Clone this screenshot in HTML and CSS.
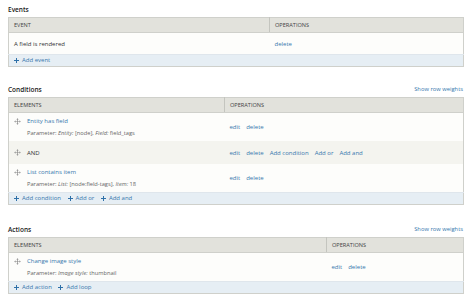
FILE: index.html
```html
<!DOCTYPE html>
<html lang="en">
<head>
    <meta charset="UTF-8">
    <title>Rule elements</title>
    <link rel="stylesheet" href="styles.css">
</head>
<body>
    <div class="page">
        <!-- Events -->
        <div class="section-title section-first">
            <h2>Events</h2>
        </div>
        <table class="rules-table">
            <thead>
                <tr>
                    <th class="col-events">Event</th>
                    <th>Operations</th>
                </tr>
            </thead>
            <tbody>
                <tr class="row-odd row-event">
                    <td class="plain">A field is rendered</td>
                    <td><a href="#">delete</a></td>
                </tr>
            </tbody>
            <tfoot>
                <tr>
                    <td colspan="2">
                        <a href="#" class="add-link"><svg viewBox="0 0 10 10"><path d="M4 0h2v4h4v2H6v4H4V6H0V4h4z"/></svg>Add event</a>
                    </td>
                </tr>
            </tfoot>
        </table>

        <!-- Conditions -->
        <div class="section-title">
            <h2>Conditions</h2>
            <a href="#" class="weights">Show row weights</a>
        </div>
        <table class="rules-table">
            <thead>
                <tr>
                    <th class="col-conditions">Elements</th>
                    <th>Operations</th>
                </tr>
            </thead>
            <tbody>
                <tr class="row-odd row-tall">
                    <td>
                        <div class="element">
                            <span class="handle"><svg viewBox="0 0 12 12"><path d="M6 0.5l2 2H6.6v2.9h2.9V4l2 2-2 2V6.6H6.6v2.9H8l-2 2-2-2h1.4V6.6H2.5V8l-2-2 2-2v1.4h2.9V2.5H4z"/></svg></span>
                            <div>
                                <a href="#" class="element-name">Entity has field</a>
                                <div class="param">Parameter: <em>Entity:</em> [node], <em>Field:</em> field_tags</div>
                            </div>
                        </div>
                    </td>
                    <td class="ops"><a href="#">edit</a><a href="#">delete</a></td>
                </tr>
                <tr class="row-even row-and">
                    <td>
                        <div class="element">
                            <span class="handle"><svg viewBox="0 0 12 12"><path d="M6 0.5l2 2H6.6v2.9h2.9V4l2 2-2 2V6.6H6.6v2.9H8l-2 2-2-2h1.4V6.6H2.5V8l-2-2 2-2v1.4h2.9V2.5H4z"/></svg></span>
                            <span class="plain">AND</span>
                        </div>
                    </td>
                    <td class="ops"><a href="#">edit</a><a href="#">delete</a><a href="#">Add condition</a><a href="#">Add or</a><a href="#">Add and</a></td>
                </tr>
                <tr class="row-odd row-tall">
                    <td>
                        <div class="element">
                            <span class="handle"><svg viewBox="0 0 12 12"><path d="M6 0.5l2 2H6.6v2.9h2.9V4l2 2-2 2V6.6H6.6v2.9H8l-2 2-2-2h1.4V6.6H2.5V8l-2-2 2-2v1.4h2.9V2.5H4z"/></svg></span>
                            <div>
                                <a href="#" class="element-name">List contains item</a>
                                <div class="param">Parameter: <em>List:</em> [node:field-tags], <em>Item:</em> 18</div>
                            </div>
                        </div>
                    </td>
                    <td class="ops"><a href="#">edit</a><a href="#">delete</a></td>
                </tr>
            </tbody>
            <tfoot>
                <tr>
                    <td colspan="2">
                        <a href="#" class="add-link"><svg viewBox="0 0 10 10"><path d="M4 0h2v4h4v2H6v4H4V6H0V4h4z"/></svg>Add condition</a>
                        <a href="#" class="add-link"><svg viewBox="0 0 10 10"><path d="M4 0h2v4h4v2H6v4H4V6H0V4h4z"/></svg>Add or</a>
                        <a href="#" class="add-link"><svg viewBox="0 0 10 10"><path d="M4 0h2v4h4v2H6v4H4V6H0V4h4z"/></svg>Add and</a>
                    </td>
                </tr>
            </tfoot>
        </table>

        <!-- Actions -->
        <div class="section-title section-actions">
            <h2>Actions</h2>
            <a href="#" class="weights">Show row weights</a>
        </div>
        <table class="rules-table">
            <thead>
                <tr>
                    <th class="col-actions">Elements</th>
                    <th>Operations</th>
                </tr>
            </thead>
            <tbody>
                <tr class="row-odd row-tall">
                    <td>
                        <div class="element">
                            <span class="handle"><svg viewBox="0 0 12 12"><path d="M6 0.5l2 2H6.6v2.9h2.9V4l2 2-2 2V6.6H6.6v2.9H8l-2 2-2-2h1.4V6.6H2.5V8l-2-2 2-2v1.4h2.9V2.5H4z"/></svg></span>
                            <div>
                                <a href="#" class="element-name">Change image style</a>
                                <div class="param">Parameter: <em>Image style:</em> thumbnail</div>
                            </div>
                        </div>
                    </td>
                    <td class="ops"><a href="#">edit</a><a href="#">delete</a></td>
                </tr>
            </tbody>
            <tfoot>
                <tr>
                    <td colspan="2">
                        <a href="#" class="add-link"><svg viewBox="0 0 10 10"><path d="M4 0h2v4h4v2H6v4H4V6H0V4h4z"/></svg>Add action</a>
                        <a href="#" class="add-link"><svg viewBox="0 0 10 10"><path d="M4 0h2v4h4v2H6v4H4V6H0V4h4z"/></svg>Add loop</a>
                    </td>
                </tr>
            </tfoot>
        </table>
    </div>
</body>
</html>
```

FILE: styles.css
```css
body {
    font-family: "Open Sans", "DejaVu Sans", sans-serif;
    font-size: 6px;
    color: #333;
    margin: 0;
    padding: 0;
    background-color: #fff;
}

a {
    color: #3677ad;
    text-decoration: none;
}

.page {
    padding: 0 10px 0 8px;
}

/* Section headings */
.section-title {
    display: flex;
    justify-content: space-between;
    align-items: center;
    height: 16px;
    margin-top: 14px;
}

.section-first {
    margin-top: 1px;
}

.section-actions {
    margin-top: 16px;
}

.section-title h2 {
    margin: 0;
    font-size: 6.5px;
    font-weight: 600;
    color: #1a1a1a;
}

.weights {
    font-size: 5.8px;
    padding-right: 1px;
}

/* Tables */
.rules-table {
    width: 100%;
    border-collapse: collapse;
    border: 1px solid #cfd0cb;
}

.rules-table th {
    background-color: #e2e2dc;
    border-bottom: 1px solid #cfd0cb;
    border-left: 1px solid #c4c5bf;
    height: 14px;
    padding: 0 5px;
    text-align: left;
    text-transform: uppercase;
    font-weight: normal;
    font-size: 5.6px;
    color: #444;
}

.rules-table th:first-child {
    border-left: none;
}

.col-events {
    width: 250px;
}

.col-conditions {
    width: 205px;
}

.col-actions {
    width: 307px;
}

.rules-table td {
    padding: 0 5px;
    vertical-align: middle;
}

.row-odd {
    background-color: #fdfdfb;
}

.row-even {
    background-color: #f4f4ef;
}

.row-event td {
    height: 21px;
}

.row-tall td {
    height: 28px;
}

.row-and td {
    height: 23px;
}

.plain {
    color: #333;
}

.ops a {
    margin-right: 6px;
}

/* Element cell */
.element {
    display: flex;
    align-items: center;
    gap: 6px;
}

.element > div {
    display: flex;
    flex-direction: column;
    gap: 4px;
}

.handle {
    display: flex;
    align-self: flex-start;
    margin-top: 1px;
}

.row-and .handle {
    align-self: center;
    margin-top: 0;
}

.handle svg {
    width: 7px;
    height: 7px;
    fill: #8a8a8a;
}

.element-name {
    font-size: 6px;
    line-height: 8px;
}

.param {
    font-size: 5.7px;
    line-height: 8px;
    color: #666;
}

/* Footer rows */
.rules-table tfoot td {
    background-color: #e6eef4;
    border-top: 1px solid #dfe6ec;
    height: 11px;
    padding: 0 5px;
}

.add-link {
    display: inline-flex;
    align-items: center;
    gap: 3px;
    margin-right: 5px;
}

.add-link svg {
    width: 5px;
    height: 5px;
    fill: #2e70a8;
}
```
